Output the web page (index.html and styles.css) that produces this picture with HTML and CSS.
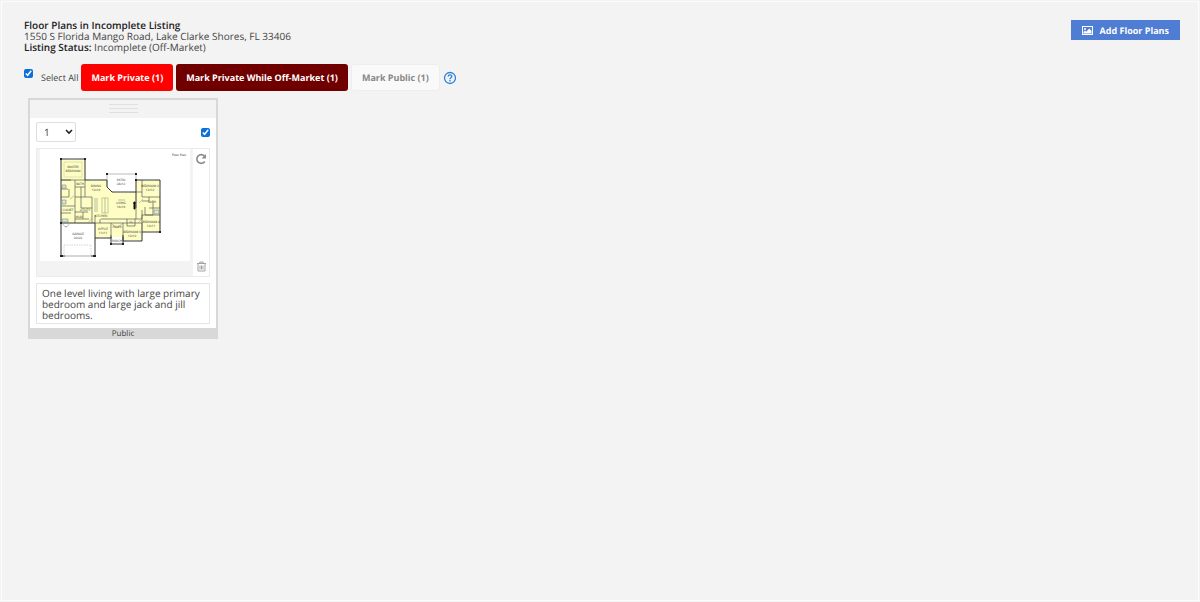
FILE: index.html
```html
<!DOCTYPE html>
<html lang="en">

<head>
    <meta charset="UTF-8">
    <meta name="viewport" content="width=device-width, initial-scale=1.0">
    <title>Floor Plans</title>
    <link rel="stylesheet" href="styles.css">
</head>

<body>
    <div class="page">
        <div class="header">
            <div class="listing">
                <h1>Floor Plans in Incomplete Listing</h1>
                <p>1550 S Florida Mango Road, Lake Clarke Shores, FL 33406</p>
                <p><b>Listing Status:</b> Incomplete (Off-Market)</p>
            </div>
            <button class="add" type="button">
                <svg width="11" height="9" viewBox="0 0 11 9">
                    <rect x="0.5" y="0.5" width="10" height="8" fill="none" stroke="#fff" />
                    <circle cx="3" cy="3" r="1" fill="#fff" />
                    <path d="M1.5 7.5V6L3 4.5l1.3 1.3L7.3 2.5 9.5 5v2.5z" fill="#fff" />
                </svg>
                Add Floor Plans
            </button>
        </div>

        <div class="actions">
            <input class="check" type="checkbox" id="all" checked>
            <label for="all">Select All</label>
            <button class="btn private" type="button">Mark Private (1)</button>
            <button class="btn off-market" type="button">Mark Private While Off-Market (1)</button>
            <button class="btn public" type="button" disabled>Mark Public (1)</button>
            <button class="help" type="button" aria-label="Help">
                <svg width="14" height="14" viewBox="0 0 14 14" fill="none" stroke="#2a80dc">
                    <circle cx="7" cy="7" r="5.5" stroke-width="1.3" />
                    <path d="M5.2 5.6C5.2 3.4 8.8 3.4 8.8 5.5 8.8 6.8 7 6.8 7 8.2M7 9.1v1.3" stroke-width="1.3" />
                </svg>
            </button>
        </div>

        <div class="card">
            <div class="grip"><i></i><i></i><i></i></div>
            <div class="card-body">
                <div class="card-top">
                    <div class="order">
                        <select aria-label="Order">
                            <option>1</option>
                        </select>
                        <svg width="8" height="6" viewBox="0 0 8 6" fill="none" stroke="#222">
                            <path d="M1 1L4 4L7 1" stroke-width="1.6" />
                        </svg>
                    </div>
                    <input class="check" type="checkbox" aria-label="Select floor plan" checked>
                </div>
                <div class="photo">
                    <svg class="plan" viewBox="0 0 150 112">
                        <rect width="150" height="112" fill="#fff" />
                        <!-- heated area -->
                        <path d="M21 10H45V31H67V38L72 43H96V31H120V83H102V92H83V88H71V89H55V74H21Z" fill="#fdfdc4" />
                        <!-- outer walls -->
                        <g fill="none" stroke="#333">
                            <path d="M21 107V10H45V31H67V38L72 43H96V31H120V83H102V92H83V88M71 88V89H55V107" />
                            <path d="M21 74H55V89M21 107H25M51 107H55M71 86V95H83V86" />
                            <path d="M96 43V59M21 31H31M93 54H96" />
                        </g>
                        <path d="M67 38V25H96V31M25 107H51" fill="none" stroke="#777" stroke-width="0.5" />
                        <!-- inner walls -->
                        <g fill="none" stroke="#444" stroke-width="0.6">
                            <path d="M31 31H45V38H35M35 31V74M21 40H28M21 48H29V40M21 57H35M35 48H45V38M41 38V59H52V74" />
                            <path d="M45 48H52V59M21 64H31M35 63H48M35 70H43V63M43 70H49M55 74H71V86M71 74H83V88" />
                            <path d="M55 74V66M60 70V74M61 70H96M83 74H102V83M87 70V77H95V70M96 59V70H102V61" />
                            <path d="M96 43H102V31M102 43V48H120M102 52H109V48M109 59H120M105 58V66H113V58M102 66H120M102 66V83M113 52V58" />
                        </g>
                        <rect x="24" y="13" width="18" height="15" fill="none" stroke="#bbb985" stroke-width="0.4" />
                        <rect x="24" y="96" width="27" height="11" fill="none" stroke="#aaa" stroke-width="0.5" stroke-dasharray="1.5 1" />
                        <rect x="62" y="49" width="6" height="15" fill="none" stroke="#aaa875" stroke-width="0.6" />
                        <path d="M65 49V64M55 49V63M57 49V63M78 51H85" stroke="#8a9a89" stroke-width="0.6" />
                        <path d="M94 53H95V60H94Z" fill="#111" stroke="#111" />
                        <path d="M23 75a4 4 0 0 0 4 3M29 75a4 4 0 0 1-4 3M48 74l4-5M71 74l6 5 6-5M99 54l4-4M98 74l4-4M30 50l4-3" fill="none" stroke="#888" stroke-width="0.5" />
                        <path d="M22 36H26V39H22ZM22 51H26V55H22ZM22 70H28V73H22ZM114 61H119V65H114Z" fill="#dce7c9" stroke="#678" stroke-width="0.5" />
                        <!-- windows and posts -->
                        <path d="M27 10H39M50 31H61M75 43H90M103 31H115M120 38V45M106 83H116M87 92H98M59 89H67M21 52V59" stroke="#9aa4a8" />
                        <path d="M20 9h2v2h-2zM44 9h2v2h-2zM66 24h2v2h-2zM95 24h2v2h-2zM20 106h3v2h-3zM53 106h3v2h-3zM70 94h2v2h-2zM82 94h2v2h-2zM95 30h2v2h-2zM119 82h2v2h-2zM20 73h2v2h-2z" fill="#222" />
                        <g class="rooms">
                            <text x="33" y="19">MASTER</text>
                            <text x="33" y="23">BEDROOM</text>
                            <text x="56" y="38">DINING</text>
                            <text x="56" y="42">12x10</text>
                            <text x="81" y="32">PATIO</text>
                            <text x="81" y="36">24x12</text>
                            <text x="81" y="55">LIVING</text>
                            <text x="81" y="59">18x18</text>
                            <text x="61" y="68">KITCHEN</text>
                            <text x="110" y="38">BEDROOM 2</text>
                            <text x="110" y="42">12x12</text>
                            <text x="112" y="54">BATH</text>
                            <text x="111" y="74">BEDROOM 4</text>
                            <text x="111" y="78">12x11</text>
                            <text x="92" y="84">BEDROOM 3</text>
                            <text x="92" y="88">12x12</text>
                            <text x="63" y="81">OFFICE</text>
                            <text x="63" y="85">11x11</text>
                            <text x="77" y="79">FOYER</text>
                            <text x="77" y="93">PORCH</text>
                            <text x="38" y="86">GARAGE</text>
                            <text x="38" y="90">22x22</text>
                            <text x="40" y="36">BATH</text>
                            <text x="28" y="62">CLOSET</text>
                            <text x="45" y="62">UTILITY</text>
                            <text x="39" y="69">MUD</text>
                            <text x="91" y="74">CL</text>
                        </g>
                        <text class="plan-title" x="132" y="7">Floor Plan</text>
                    </svg>
                    <div class="tools">
                        <button type="button" aria-label="Rotate">
                            <svg width="12" height="12" viewBox="0 0 11 11" fill="none" stroke="#8b8b8b">
                                <path d="M8.6 2.7A4 4 0 1 0 9 7.8" stroke-width="1.5" />
                                <path d="M10 1V5H6Z" fill="#8b8b8b" stroke="none" />
                            </svg>
                        </button>
                        <button type="button" aria-label="Delete">
                            <svg width="11" height="11" viewBox="0 0 11 11" fill="none" stroke="#999">
                                <path d="M1 2.5H10M3.8 2.5V1H7.2V2.5M2 3V10H9V3M4 4.5V8.5M5.5 4.5V8.5M7 4.5V8.5" stroke-width="0.9" />
                            </svg>
                        </button>
                    </div>
                </div>
                <textarea class="caption" rows="3" aria-label="Description">One level living with large primary bedroom and large jack and jill bedrooms.</textarea>
            </div>
            <div class="status">Public</div>
        </div>
    </div>
</body>

</html>
```

FILE: styles.css
```css
* {
    margin: 0;
    padding: 0;
    box-sizing: border-box;
}

body {
    padding: 1px;
    background: #f3f3f3;
    color: #444;
    font: 10px/11px "Open Sans", sans-serif;
    text-rendering: geometricPrecision;
}

button,
select,
textarea {
    font: inherit;
    color: inherit;
    border: 0;
    background: none;
    text-rendering: inherit;
}

svg {
    display: block;
}

.page {
    min-height: calc(100vh - 2px);
    padding: 18px 18px 18px 22px;
    border: 1px solid #fcfcfc;
}

.header {
    display: flex;
    justify-content: space-between;
    align-items: flex-start;
}

.listing h1,
.listing b {
    font-size: 10px;
    font-weight: 600;
    color: #222;
}

.add {
    display: flex;
    align-items: center;
    gap: 7px;
    height: 20px;
    padding: 0 11px;
    background: #4f7dd3;
    color: #fff;
    font-size: 9px;
    font-weight: 700;
}

.check {
    width: 9px;
    height: 9px;
    accent-color: #0b70d8;
}

.actions {
    display: flex;
    align-items: center;
    gap: 3px;
    margin-top: 11px;
    font-size: 9px;
}

.actions .check {
    margin: 0 5px 8px 0;
}

.btn {
    height: 27px;
    padding: 0 10px;
    border-radius: 3px;
    color: #fff;
    font-weight: 700;
}

.private {
    background: #f00;
}

.off-market {
    background: #700000;
}

.public {
    border: 1px solid #eee;
    background: #f9f9f9;
    color: #888;
}

.card {
    width: 190px;
    margin: 7px 0 0 4px;
    border: 2px solid #d8d8d8;
    border-bottom: 0;
    background: #fff;
}

.grip {
    display: flex;
    flex-direction: column;
    align-items: center;
    gap: 3px;
    height: 18px;
    padding-top: 4px;
    background: #f3f3f3;
}

.grip i {
    width: 29px;
    height: 1px;
    background: #e0e0e0;
}

.card-body {
    padding: 4px 6px;
}

.card-top {
    display: flex;
    justify-content: space-between;
    align-items: center;
    margin-bottom: 6px;
}

.order {
    display: grid;
    align-items: center;
    width: 40px;
    height: 20px;
    border: 1px solid #ddd;
    border-radius: 2px;
}

.order select,
.order svg {
    grid-area: 1 / 1;
}

.order select {
    height: 18px;
    padding-left: 7px;
    appearance: none;
}

.order svg {
    justify-self: end;
    margin-right: 2px;
    pointer-events: none;
}

.photo {
    display: flex;
    justify-content: space-between;
    height: 129px;
    padding-left: 3px;
    border: 1px solid #ebebeb;
    background: #f3f3f3;
}

.plan {
    width: 150px;
    height: 112px;
}

.rooms {
    font-size: 3px;
    text-anchor: middle;
    fill: #222;
}

.plan-title {
    font-size: 3px;
}

.tools {
    display: flex;
    flex-direction: column;
    justify-content: space-between;
    align-items: center;
    width: 16px;
    padding: 4px 0;
    background: #fff;
}

.caption {
    display: block;
    width: 100%;
    height: 41px;
    margin-top: 6px;
    padding: 4px 5px 0;
    border: 1px solid #e6e6e6;
    resize: none;
    overflow: hidden;
}

.status {
    background: #d8d8d8;
    font-size: 8px;
    text-align: center;
}
```
